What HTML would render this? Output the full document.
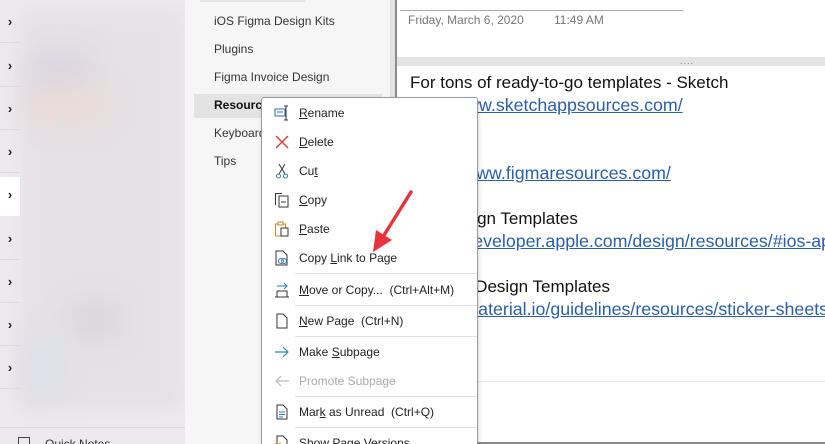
<!DOCTYPE html>
<html style="width:825px;height:444px;overflow:hidden"><head><meta charset="utf-8"><style>
*{margin:0;padding:0;box-sizing:border-box}
body{width:825px;height:444px;overflow:hidden;position:relative;background:#fff;font-family:"Liberation Sans",sans-serif}
.abs{position:absolute}
.side{left:0;top:0;width:185px;height:444px;background:#ede9ec}
.chev{left:0;width:20px;height:43px;font-size:13px;color:#222;font-weight:bold;text-align:center;line-height:43px;border-bottom:1px solid #ddd9dc}
.plist{left:185px;top:0;width:205px;height:444px;background:#f7f6f6}
.pi{left:214px;font-size:12px;color:#333}
.menu{left:261px;top:97px;width:217px;height:360px;background:#fff;border:1px solid #9a9a9a;border-radius:3px;box-shadow:1px 2px 4px rgba(0,0,0,.15)}
.mi{left:37px;font-size:12px;color:#222;white-space:nowrap}
.ic{left:12px;width:16px;height:16px}
.sep{left:33px;right:0;height:1px;background:#e1e1e1}
.c{font-family:"Liberation Sans",sans-serif;font-size:17px;color:#111;white-space:nowrap}
.l{color:#2a5fa8;text-decoration:underline;font-size:17.8px;white-space:nowrap}
</style></head><body>
<div class="abs side"></div>
<div class="abs" style="left:22px;top:10px;width:160px;height:400px;background:#e6e1e5;filter:blur(8px)"></div>
<div class="abs" style="left:30px;top:50px;width:60px;height:60px;background:#dcd6e2;filter:blur(12px)"></div>
<div class="abs" style="left:30px;top:85px;width:80px;height:40px;background:#e8ddd8;filter:blur(12px)"></div>
<div class="abs" style="left:70px;top:300px;width:50px;height:40px;background:#dcd7da;filter:blur(12px)"></div>
<div class="abs" style="left:22px;top:330px;width:45px;height:70px;background:#dfe0e8;filter:blur(10px)"></div>
<div class="abs" style="left:0;top:177px;width:20px;height:39px;background:#fff"></div>
<div class="abs chev" style="top:0">›</div>
<div class="abs chev" style="top:44px">›</div>
<div class="abs chev" style="top:87px">›</div>
<div class="abs chev" style="top:130px">›</div>
<div class="abs chev" style="top:174px;border:none;line-height:41px">›</div>
<div class="abs chev" style="top:217px">›</div>
<div class="abs chev" style="top:260px">›</div>
<div class="abs chev" style="top:303px">›</div>
<div class="abs chev" style="top:346px">›</div>
<div class="abs" style="left:0;top:427px;width:185px;height:1px;background:#dad6d9"></div>
<div class="abs" style="left:18px;top:437px;width:12px;height:10px;border:1.5px solid #444;border-bottom:none"></div>
<div class="abs" style="left:45px;top:437px;font-size:12px;color:#333">Quick Notes</div>

<div class="abs plist"></div>
<div class="abs" style="left:200px;top:0;width:105px;height:2px;background:#e4e4e4"></div>
<div class="abs pi" style="top:14px">iOS Figma Design Kits</div>
<div class="abs pi" style="top:42px">Plugins</div>
<div class="abs pi" style="top:70px">Figma Invoice Design</div>
<div class="abs" style="left:194px;top:94px;width:188px;height:24px;background:#e4e3e3"></div>
<div class="abs pi" style="top:98px;font-weight:bold;color:#111">Resources</div>
<div class="abs pi" style="top:126px">Keyboard</div>
<div class="abs pi" style="top:154px">Tips</div>

<div class="abs" style="left:390px;top:0;width:5px;height:444px;background:#e2e2e2"></div>
<div class="abs" style="left:395px;top:0;width:2px;height:444px;background:#8a8a8a"></div>
<div class="abs" style="left:400px;top:10px;width:283px;height:1px;background:#aaa"></div>
<div class="abs" style="left:408px;top:13px;font-size:12px;color:#777">Friday, March 6, 2020</div>
<div class="abs" style="left:554px;top:13px;font-size:12px;color:#777">11:49 AM</div>
<div class="abs" style="left:397px;top:57px;width:428px;height:9px;background:#e4e4e4"></div>
<div class="abs" style="left:680px;top:56px;font-size:9px;color:#888;letter-spacing:1px">....</div>
<div class="abs c" style="left:410px;top:73px">For tons of ready-to-go templates - Sketch</div>
<div class="abs l" style="left:400px;top:95px">https://www.sketchappsources.com/</div>
<div class="abs l" style="left:410px;top:163px">https://www.figmaresources.com/</div>
<div class="abs c" style="left:410px;top:209px">iOS Design Templates</div>
<div class="abs l" style="left:410px;top:231px">https://developer.apple.com/design/resources/#ios-apps</div>
<div class="abs c" style="left:410px;top:277px">Material Design Templates</div>
<div class="abs l" style="left:410px;top:299px">https://material.io/guidelines/resources/sticker-sheets</div>
<div class="abs" style="left:478px;top:381px;width:347px;height:1px;background:#ececec"></div>
<div class="abs" style="left:397px;top:442px;width:428px;height:2px;background:#8a8a8a"></div>

<div class="abs menu">
 <svg class="abs ic" style="top:7px" viewBox="0 0 16 16"><rect x="1" y="4" width="10" height="7" fill="none" stroke="#2b6cb0"/><line x1="3" y1="7" x2="9" y2="7" stroke="#2b6cb0"/><line x1="12" y1="1" x2="12" y2="15" stroke="#333"/><line x1="10" y1="1" x2="14" y2="1" stroke="#333"/><line x1="10" y1="15" x2="14" y2="15" stroke="#333"/></svg>
 <div class="abs mi" style="top:8px"><u>R</u>ename</div>
 <svg class="abs ic" style="top:36px" viewBox="0 0 16 16"><path d="M2 2L14 14M14 2L2 14" stroke="#d9383a" stroke-width="1.4"/></svg>
 <div class="abs mi" style="top:37px"><u>D</u>elete</div>
 <svg class="abs ic" style="top:65px" viewBox="0 0 16 16"><path d="M5 1L11 11M11 1L5 11" stroke="#333"/><circle cx="4.5" cy="13" r="2" fill="none" stroke="#2b7bb0"/><circle cx="11.5" cy="13" r="2" fill="none" stroke="#2b7bb0"/></svg>
 <div class="abs mi" style="top:66px">Cu<u>t</u></div>
 <svg class="abs ic" style="top:94px" viewBox="0 0 16 16"><path d="M1.5 13V1.5H8" fill="none" stroke="#333"/><rect x="5" y="4" width="9" height="11" fill="none" stroke="#333"/><line x1="7" y1="10" x2="12" y2="10" stroke="#333"/></svg>
 <div class="abs mi" style="top:95px"><u>C</u>opy</div>
 <svg class="abs ic" style="top:123px" viewBox="0 0 16 16"><rect x="1.5" y="3" width="10" height="12" fill="none" stroke="#c48a2a"/><rect x="4" y="1" width="5" height="3" fill="#fff" stroke="#c48a2a"/><rect x="7" y="7" width="7" height="8" fill="#fff" stroke="#333"/></svg>
 <div class="abs mi" style="top:124px"><u>P</u>aste</div>
 <svg class="abs ic" style="top:152px" viewBox="0 0 16 16"><path d="M2 1h7l4 4v10H2z" fill="none" stroke="#333"/><circle cx="7" cy="11" r="2.5" fill="none" stroke="#2b7bb0"/><circle cx="10" cy="11" r="2.5" fill="none" stroke="#2b7bb0"/></svg>
 <div class="abs mi" style="top:153px">Copy <u>L</u>ink to Page</div>
 <div class="abs sep" style="top:175px"></div>
 <svg class="abs ic" style="top:184px" viewBox="0 0 16 16"><path d="M3 4h10M10 1l3 3-3 3" fill="none" stroke="#2b7bb0"/><path d="M3 9v6M1 15h14M3 9h10v6" fill="none" stroke="#333"/></svg>
 <div class="abs mi" style="top:185px"><u>M</u>ove or Copy...&nbsp; (Ctrl+Alt+M)</div>
 <div class="abs sep" style="top:207px"></div>
 <svg class="abs ic" style="top:215px" viewBox="0 0 16 16"><path d="M3 1h6l4 4v10H3z" fill="none" stroke="#333"/></svg>
 <div class="abs mi" style="top:216px"><u>N</u>ew Page&nbsp; (Ctrl+N)</div>
 <div class="abs sep" style="top:238px"></div>
 <svg class="abs ic" style="top:246px" viewBox="0 0 16 16"><path d="M1 8h13M9 3l5 5-5 5" fill="none" stroke="#2b8bb0" stroke-width="1.2"/></svg>
 <div class="abs mi" style="top:247px">Make <u>S</u>ubpage</div>
 <svg class="abs ic" style="top:275px" viewBox="0 0 16 16"><path d="M15 8H2M7 3L2 8l5 5" fill="none" stroke="#bbb" stroke-width="1.2"/></svg>
 <div class="abs mi" style="top:276px;color:#aaa">Promote Subpage</div>
 <div class="abs sep" style="top:298px"></div>
 <svg class="abs ic" style="top:306px" viewBox="0 0 16 16"><path d="M3 1h6l4 4v10H3z" fill="none" stroke="#333"/><path d="M5 8h6M5 10.5h6M5 13h4" stroke="#2b7bb0"/></svg>
 <div class="abs mi" style="top:307px">Mar<u>k</u> as Unread&nbsp; (Ctrl+Q)</div>
 <div class="abs sep" style="top:329px"></div>
 <svg class="abs ic" style="top:337px" viewBox="0 0 16 16"><path d="M3 1h6l4 4v10H3z" fill="none" stroke="#333"/><rect x="1" y="8" width="6" height="5" fill="#e0a030"/></svg>
 <div class="abs mi" style="top:338px">Show Page Versions</div>
</div>
<svg class="abs" style="left:365px;top:190px" width="50" height="65" viewBox="0 0 50 65"><line x1="46" y1="2" x2="16" y2="50" stroke="#e8333c" stroke-width="3.5" stroke-linecap="round"/><path d="M8 62L11 40L27 50Z" fill="#e8333c"/></svg>
</body></html>
